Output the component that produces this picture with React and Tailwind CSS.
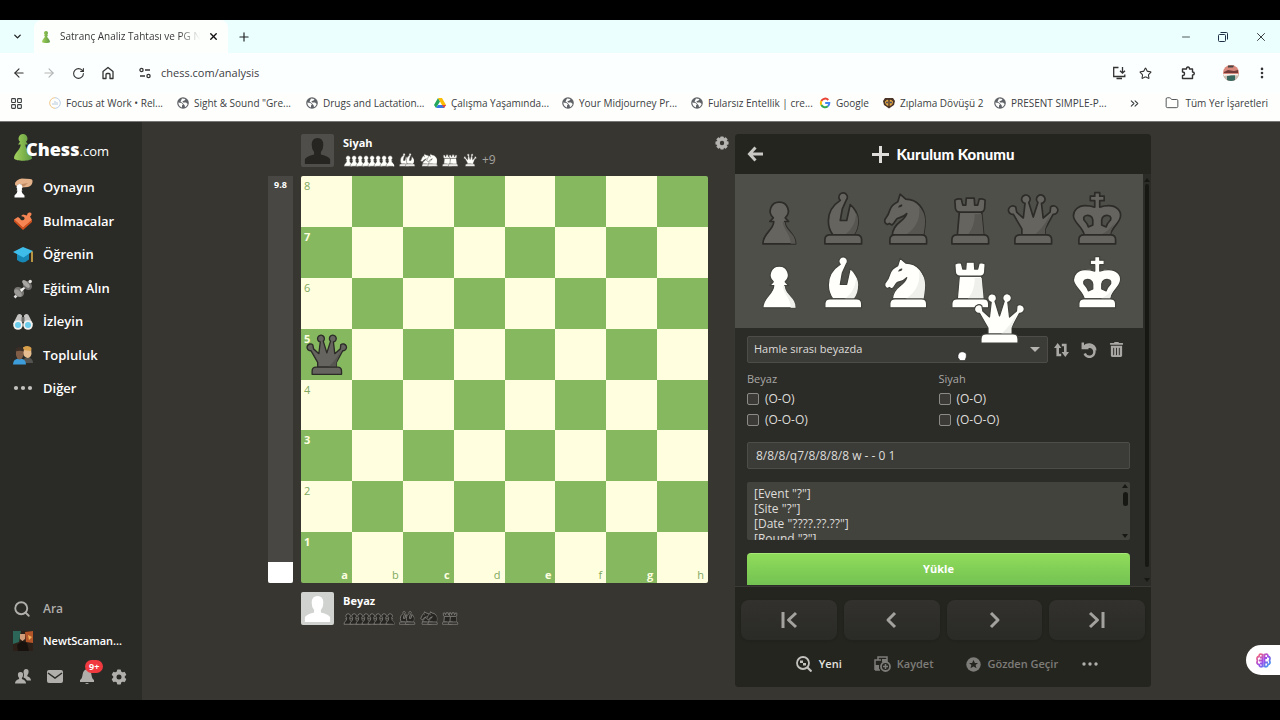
import {
  ArrowLeft, ArrowRight, RotateCw, Star, EllipsisVertical, Plus, X, ChevronDown,
  ChevronsRight, Folder, Search, Minus, LayoutGrid
} from 'lucide-react'
import { FaTrashAlt } from 'react-icons/fa'

const bookmarks = [
  { label: 'Focus at Work • Rel...', icon: 'ring', width: 'w-[112px]' },
  { label: 'Sight & Sound "Gre...', icon: 'globe', width: 'w-[113px]' },
  { label: 'Drugs and Lactation...', icon: 'globe', width: 'w-[112px]' },
  { label: 'Çalışma Yaşamında...', icon: 'drive', width: 'w-[112px]' },
  { label: 'Your Midjourney Pr...', icon: 'globe', width: 'w-[113px]' },
  { label: 'Fularsız Entellik | cre...', icon: 'globe', width: 'w-[112px]' },
  { label: 'Google', icon: 'google', width: 'w-[48px]' },
  { label: 'Zıplama Dövüşü 2', icon: 'game', width: 'w-[95px]' },
  { label: 'PRESENT SIMPLE-P...', icon: 'globe', width: 'w-[116px]' }
]

const navItems = [
  { label: 'Oynayın', icon: 'play' },
  { label: 'Bulmacalar', icon: 'puzzle' },
  { label: 'Öğrenin', icon: 'learn' },
  { label: 'Eğitim Alın', icon: 'train' },
  { label: 'İzleyin', icon: 'watch' },
  { label: 'Topluluk', icon: 'social' },
  { label: 'Diğer', icon: 'more' }
]

const pgn = `[Event "?"]
[Site "?"]
[Date "????.??.??"]
[Round "?"]
[White "?"]
[Black "?"]
[Result "*"]`

const files = ['a', 'b', 'c', 'd', 'e', 'f', 'g', 'h']
const ranks = [8, 7, 6, 5, 4, 3, 2, 1]

const BASE = 'M14 57V53Q14 48 19 48H46Q51 48 51 53V57Z'

const shapes = {
  pawn: {
    body: 'M32.500 15a9 9 0 0 1 6 15.800L42 34.500H38C38.500 44 49 46 49 57H16C16 46 26.500 44 27 34.500H23L26.500 30.800A9 9 0 0 1 32.500 15Z',
    shade: 'M36 35H38C38.500 44 49 46 49 57H44C44 47 37 44 36 35Z'
  },
  bishop: {
    body: 'M29.500 13.200A4.300 4.300 0 1 1 35.500 13L31.500 22L29.500 33.500H36L39.500 17.500C44 21 47.500 27 47.500 34C47.500 40 46 44 43 48H22C19 44 17.500 40 17.500 34C17.500 25 22 18 29.500 13.200Z',
    shade: 'M45.500 26C47 29 47.500 31 47.500 34C47.500 40 46 44 43 48H34C41 43 45 36 45.500 26Z',
    base: BASE
  },
  knight: {
    body: 'M26.300 7L32 12C44 12 51.500 22 51.500 34C51.500 40 50.500 44 50 48H18.500C19 41 22 38 26 35C30 32 32 30 33 26.500C30 30 26 30.500 23.500 31.500C21.500 32.500 22 35 18 38L15.500 36.500L13.500 37.500C11 36.500 10.500 34.500 11 32.500C13 30 15 27 16 23C17 19 19 17 24 14.500Z',
    shade: 'M45.500 20C50 24 51.500 29 51.500 34C51.500 40 50.500 44 50 48H32C42 42 47 32 45.500 20Z',
    detail: 'M24 20.500Q26 16.500 28.500 17.500Q29 20.500 24 20.500Z',
    base: 'M16 57V53Q16 48 21 48H48Q53 48 53 53V57Z'
  },
  rook: {
    body: 'M21.500 25L19.500 48H46L44 25Z',
    shade: 'M37 27H44L46 48H30C35 42 37 35 37 27Z',
    top: 'M17 13Q20 11 23.500 12L25 18H28L28.500 11H36.500L37 18H40L41.500 12Q45 11 47.500 13L47 21Q46.500 25 43 25H22Q18 25 17.500 21Z',
    base: BASE
  },
  queen: {
    body: 'M14.900 20A4.300 4.300 0 1 0 12.500 27.300L21 42V48H44.500V42L52.500 27.300A4.300 4.300 0 1 0 50 19.900L49.500 25L42.500 31L40.800 16.300A4.300 4.300 0 1 0 37.200 15.300L32.500 30L28 15.300A4.300 4.300 0 1 0 24.200 16.300L22.500 31L15.800 25Z',
    shade: 'M50 27L44.500 42V48H34C41 42 45 36 50 27Z',
    base: BASE
  },
  king: {
    body: 'M30 20V13.500H25.500V9H30V5.500H35V9H39.500V13.500H35V20C38 19 41 18.500 44 18.500C52 18.500 56.500 23.500 56 29C55.500 36 48 39 45.500 48H19.500C17 39 9 36 8.500 29C8.500 23.500 13 18.500 20 18.500C24 18.500 27 19 30 20ZM28 38V33C27.500 29 24 28 21.500 28.500C18.500 29 18 32 20 34C22 36 23 37.500 23.500 40ZM37 38V33C37.500 29 41 28 43.500 28.500C46.500 29 47 32 45 34C43 36 42 37.500 41.500 40Z',
    shade: 'M50 36C48 39 46.500 43 45.500 48H36C42 45 46 41 50 36Z',
    base: BASE
  }
}

const pieceNames = ['pawn', 'bishop', 'knight', 'rook', 'queen', 'king']

const tones = {
  light: { fill: '#fffffc', shade: '#efefec', line: '#42423d', width: 1.2 },
  dark: { fill: '#65645f', shade: '#575651', line: '#2c2b28', width: 1.7 },
  takenLight: { fill: '#fffffc', shade: '#fffffc', line: '#55534e', width: 2 },
  takenDark: { fill: '#262522', shade: '#262522', line: '#85837e', width: 3.4 }
}

function PieceShape({ name, tone }) {
  const s = shapes[name]
  const t = tones[tone]
  return (
    <g fill={t.fill} stroke={t.line} strokeWidth={t.width} strokeLinejoin="round">
      <path d={s.body} fillRule="evenodd" />
      <path d={s.shade} fill={t.shade} stroke="none" />
      {s.detail && <path d={s.detail} fill={t.line} stroke="none" />}
      {s.top && <path d={s.top} />}
      {s.base && <path d={s.base} />}
    </g>
  )
}

function Piece({ name, tone, className }) {
  return (
    <svg viewBox="0 0 64 64" className={className}>
      <PieceShape name={name} tone={tone} />
    </svg>
  )
}

function Captured({ tone, queen }) {
  const row = [
    ...[0, 1, 2, 3, 4, 5, 6, 7].map((i) => ['pawn', -3 + i * 6]),
    ['bishop', 53], ['bishop', 59],
    ['knight', 75], ['knight', 81],
    ['rook', 96], ['rook', 102]
  ]
  if (queen) row.push(['queen', 119])
  return (
    <svg width="137" height="16" viewBox="0 0 137 16" className="shrink-0">
      {row.map(([name, x], i) => (
        <g key={i} transform={`translate(${x} 0) scale(0.25)`}>
          <PieceShape name={name} tone={tone} />
        </g>
      ))}
    </svg>
  )
}

function PawnLogo({ className }) {
  return (
    <svg viewBox="0 0 18 27" className={className}>
      <defs>
        <linearGradient id="pawnGreen" x1="0" x2="1">
          <stop offset="0" stopColor="#a3d160" />
          <stop offset="0.5" stopColor="#81b64c" />
          <stop offset="1" stopColor="#5d9948" />
        </linearGradient>
      </defs>
      <path d="M9 0a4.500 4.500 0 0 1 3 7.800L14 10.500H11.300C11.500 16 18 19 18 24.500C16 27.500 2 27.500 0 24.500C0 19 6.500 16 6.700 10.500H4L6 7.800A4.500 4.500 0 0 1 9 0Z" fill="url(#pawnGreen)" />
    </svg>
  )
}

function BookmarkIcon({ type }) {
  if (type === 'ring') {
    return (
      <svg viewBox="0 0 12 12" className="size-3 shrink-0" fill="none">
        <path d="M6 .7A5.300 5.300 0 0 1 6 11.300" stroke="#b9cfe8" />
        <path d="M6 .7A5.300 5.300 0 0 0 6 11.300" stroke="#efc78a" />
        <path d="M4 8V6M6 8V4M8 8V5" stroke="#b7c9de" />
      </svg>
    )
  }
  if (type === 'drive') {
    return (
      <svg viewBox="0 0 12 12" className="size-3 shrink-0">
        <path d="M4 1L0 8L2 11L6 4.500Z" fill="#22a65b" />
        <path d="M4 1H8L12 8H8Z" fill="#fbbc05" />
        <path d="M2 11L4 8H12L10 11Z" fill="#3677e8" />
        <path d="M10 11L8 8H12Z" fill="#e8453c" />
      </svg>
    )
  }
  if (type === 'google') {
    return (
      <svg viewBox="0 0 12 12" className="size-3 shrink-0" fill="none" strokeWidth="2">
        <path d="M9.300 3A4.300 4.300 0 0 0 2.300 4" stroke="#ea4335" />
        <path d="M2.300 4A4.300 4.300 0 0 0 2.300 8" stroke="#fbbc05" />
        <path d="M2.300 8A4.300 4.300 0 0 0 8.800 9.300" stroke="#34a853" />
        <path d="M8.800 9.300A4.300 4.300 0 0 0 10.300 6H6.200" stroke="#4285f4" />
      </svg>
    )
  }
  if (type === 'game') {
    return (
      <svg viewBox="0 0 12 12" className="size-3 shrink-0">
        <path d="M2 1H10L12 4L11 8L6 11.500L1 8L0 4Z" fill="#4b3428" />
        <path d="M2 4.500Q4 2 5.300 3V9Q2 7.500 2 4.500M10 4.500Q8 2 6.700 3V9Q10 7.500 10 4.500" fill="#e7a93c" />
        <circle cx="4" cy="5.500" r="0.900" fill="#33416e" />
        <circle cx="8" cy="5.500" r="0.900" fill="#33416e" />
      </svg>
    )
  }
  return (
    <svg viewBox="0 0 12 12" className="size-3 shrink-0">
      <circle cx="6" cy="6" r="5.800" fill="#5f6368" />
      <path d="M1.300 5.500L4.500 6L6 7.500L5 8.500V10.600Q1.500 9.500 1.300 5.500ZM5 1.400L8.500 1.900L7.500 3.500L5.500 4.200L6 5.500L9 5.500L10.700 7Q9.800 9.500 8 10.200L7.600 8.300L5.500 6L3.500 4.500Z" fill="#fdfdfb" />
    </svg>
  )
}

function NavIcon({ type }) {
  return (
    <svg viewBox="0 0 20 20" className="size-5 shrink-0">
      {type === 'play' && (
        <>
          <path d="M2 5Q4 1 9 .5L17 1Q20 1 19.500 4Q19 8 15 9L9 9.500Q7 8.500 9 7Q5 5 3.500 8Q1.500 7.500 2 5Z" fill="#e5b188" />
          <path d="M9 6L15 5Q12 8 9 9Z" fill="#c08a62" />
          <path d="M6.500 6a3 3 0 0 1 2.200 5L9.500 12.500H8.500Q8.500 15.500 11.500 17.500V19.500H1.500V17.500Q4.500 15.500 4.500 12.500H3.500L4.300 11A3 3 0 0 1 6.500 6Z" fill="#fff" />
        </>
      )}
      {type === 'puzzle' && (
        <>
          <path d="M1 7.500L5 5Q7 6 8 8Q10.500 9 11.500 7Q12 5 9.500 4.500L8 4L10 2.500L14 3.500Q14 1 16 .5Q19 0 18.500 2.500Q18 4 17 4.500L19 8L10 16Z" fill="#f58552" />
          <path d="M1 7.500V9.500L10 18L19 10V8L10 15.500Z" fill="#d4511d" />
        </>
      )}
      {type === 'learn' && (
        <>
          <path d="M4 9H16V14.500Q10 20 4 15Z" fill="#1787b5" />
          <path d="M0 7L10 2L20 6L10.500 12.500Z" fill="#3fbdea" />
          <path d="M19 6.500V17" stroke="#e6b74a" strokeWidth="1.500" />
        </>
      )}
      {type === 'train' && (
        <>
          <path d="M1.500 18.500L4 16" stroke="#ddd" strokeWidth="2.500" />
          <ellipse cx="14.500" cy="6.500" rx="5" ry="4" fill="#6c6b69" transform="rotate(45 14.500 6.500)" />
          <ellipse cx="13" cy="5" rx="4.800" ry="2.200" fill="#a8a7a3" transform="rotate(45 13 5)" />
          <ellipse cx="6" cy="13" rx="5.500" ry="4.500" fill="#777673" transform="rotate(45 6 13)" />
          <ellipse cx="5" cy="14" rx="4.500" ry="2.500" fill="#9c9b98" transform="rotate(45 5 14)" />
          <path d="M7 10.500L11 8L12 9.500L8.500 13Z" fill="#f0f0ee" />
          <circle cx="17.200" cy="2.500" r="1.700" fill="#e2e1df" />
        </>
      )}
      {type === 'watch' && (
        <>
          <path d="M0 12L4.500 3Q6.500 1 9 3.500V13ZM20 12L15.500 3Q13.500 1 11 3.500V13Z" fill="#c4c3c1" />
          <path d="M8.500 5H11.500V10H8.500Z" fill="#6d6c6a" />
          <circle cx="5" cy="13" r="4.800" fill="#f2f1ef" />
          <circle cx="15" cy="13" r="4.800" fill="#f2f1ef" />
          <circle cx="5" cy="13" r="3" fill="#6accea" />
          <circle cx="15" cy="13" r="3" fill="#6accea" />
        </>
      )}
      {type === 'social' && (
        <>
          <path d="M9 16Q11 11 15 11.500Q20 12 20 17H9Z" fill="#55534f" />
          <path d="M10 2Q14 0 18 2L18.500 8Q17.500 12 14.500 12Q10.500 11 10 7Z" fill="#e6bd91" />
          <path d="M10 1.500Q15-1.500 18.500 2L18 5L10 4Z" fill="#d9a04b" />
          <path d="M0 18.500Q0 12.500 6.500 12.500Q13 12.500 13 18.500Z" fill="#3d9ddb" />
          <path d="M3 3H10.500V9Q9 13.500 6.500 13.500Q4 13.500 3 9Z" fill="#805d47" />
          <path d="M2.500 5.500Q2 1 6.500 1Q11.500 1 10.700 5.500Q7 4 2.500 5.500Z" fill="#3b2e27" />
        </>
      )}
      {type === 'more' && (
        <g fill="#c3c2c0">
          <circle cx="3" cy="9" r="2.100" />
          <circle cx="10" cy="9" r="2.100" />
          <circle cx="17" cy="9" r="2.100" />
        </g>
      )}
    </svg>
  )
}

function Gear({ className, teeth = 8 }) {
  const angles = Array.from({ length: teeth }, (_, i) => (i * 360) / teeth)
  return (
    <svg viewBox="0 0 16 16" className={className} fill="currentColor">
      {angles.map((a) => (
        <rect key={a} x="6" y="0.500" width="4" height="4" rx="0.800" transform={`rotate(${a} 8 8)`} />
      ))}
      <circle cx="8" cy="8" r="4.200" fill="none" stroke="currentColor" strokeWidth="3.400" />
    </svg>
  )
}

function Browser() {
  return (
    <header className="text-[#3c4043]">
      <div className="flex h-[33px] items-center bg-[#ebffff]">
        <button aria-label="Sekme ara" className="flex w-[34px] justify-center"><ChevronDown size={11} strokeWidth={3} className="text-[#222]" /></button>
        <div className="flex h-full w-[194px] items-center rounded-t-lg bg-[#fdfffd] pl-2">
          <PawnLogo className="h-3 w-2" />
          <span className="ml-2.5 w-[140px] bg-linear-to-r from-[#333] from-85% to-transparent bg-clip-text text-[10px] whitespace-nowrap text-transparent">
            Satranç Analiz Tahtası ve PG No
          </span>
          <button aria-label="Sekmeyi kapat" className="ml-2"><X size={11} strokeWidth={3} className="text-[#111]" /></button>
        </div>
        <button aria-label="Yeni sekme" className="ml-[9px]"><Plus size={14} className="text-[#222]" /></button>
        <div className="ml-auto flex gap-[25px] pr-3 text-[#222]">
          <button aria-label="Küçült"><Minus size={12} strokeWidth={1.500} /></button>
          <button aria-label="Önceki boyut">
            <svg width="12" height="12" viewBox="0 0 12 12" fill="none" stroke="#1d3045"><rect x="1.500" y="3.500" width="7" height="7" rx="1" /><path d="M3.500 1.500H9.500Q10.500 1.500 10.500 2.500V8.500" /></svg>
          </button>
          <button aria-label="Kapat"><X size={14} strokeWidth={1.500} /></button>
        </div>
      </div>
      <div className="flex h-10 items-center bg-[#fcffff] pr-[15px] pl-3 text-[#333]">
        <div className="flex items-center gap-4">
          <button aria-label="Geri"><ArrowLeft size={14} /></button>
          <button aria-label="İleri"><ArrowRight size={14} className="text-[#b4b6b6]" /></button>
          <button aria-label="Yenile"><RotateCw size={13} /></button>
          <button aria-label="Ana sayfa">
            <svg width="14" height="14" viewBox="0 0 14 14" fill="none" stroke="currentColor" strokeWidth="1.300" strokeLinejoin="round"><path d="M2 5.500L7 1.500L12 5.500V12.500H9V8.500Q9 7.500 8 7.500H6Q5 7.500 5 8.500V12.500H2Z" /></svg>
          </button>
        </div>
        <svg viewBox="0 0 12 12" className="mr-2.5 ml-6 size-3" fill="none" stroke="#333" strokeWidth="1.300">
          <circle cx="2.500" cy="3" r="1.600" /><path d="M6 3H11M1 9H6" /><circle cx="9.500" cy="9" r="1.600" />
        </svg>
        <input aria-label="Adres" defaultValue="chess.com/analysis" className="min-w-0 flex-1 bg-transparent text-[11px] text-[#3c4043] outline-none" />
        <div className="flex items-center gap-[13px]">
          <button aria-label="Yükle">
            <svg width="14" height="14" viewBox="0 0 14 14" fill="none" stroke="currentColor" strokeWidth="1.300"><path d="M6.500 1.500H1.700V10.500H12.800V8.500M4.500 12.500H10M10.500 1V7M8 4.800L10.500 7.200L13 4.800" /></svg>
          </button>
          <button aria-label="Yer işareti"><Star size={13} /></button>
        </div>
        <button aria-label="Uzantılar" className="ml-[29px]">
          <svg width="14" height="14" viewBox="0 0 14 14" fill="none" stroke="currentColor" strokeWidth="1.400" strokeLinejoin="round"><path d="M1.500 3H5.500Q5.500 1 7 1Q8.500 1 8.500 3H11.500V6Q13.300 6 13.300 7.500Q13.300 9 11.500 9V12.500H1.500V9.500Q3.500 9.500 3.500 7.700Q3.500 6 1.500 6Z" /></svg>
        </button>
        <svg viewBox="0 0 16 16" className="ml-7 size-4">
          <circle cx="8" cy="8" r="8" fill="#d8897c" />
          <path d="M0 9H16Q15 16 8 16Q1 16 0 9Z" fill="#c9bdb2" />
          <path d="M4 11L12 10V15Q8 17 4 15Z" fill="#39685f" />
          <path d="M1 7L5 5L11 6L15 5V8H1Z" fill="#723b39" />
          <path d="M0 9H15V10.500L8 10L1 11Z" fill="#f5f1ea" />
          <path d="M5 .5H11L10 2.500H5Z" fill="#4a4642" />
        </svg>
        <button aria-label="Menü" className="ml-4"><EllipsisVertical size={14} strokeWidth={2.500} className="-mr-1" /></button>
      </div>
      <nav className="flex h-[29px] items-center border-b border-[#777] bg-[#fefffc] pb-2 text-[10px] leading-4">
        <LayoutGrid size={13} className="mr-[26px] ml-2.5 shrink-0" />
        <div className="flex min-w-0 gap-4">
          {bookmarks.map((b) => (
            <a key={b.label} href="#" className={`flex shrink-0 items-center gap-[5px] whitespace-nowrap ${b.width}`}>
              <BookmarkIcon type={b.icon} />
              {b.label}
            </a>
          ))}
        </div>
        <div className="ml-auto flex shrink-0 items-center pr-3">
          <ChevronsRight size={13} className="mr-6" />
          <a href="#" className="flex items-center gap-1.5 whitespace-nowrap"><Folder size={14} strokeWidth={1.500} />Tüm Yer İşaretleri</a>
        </div>
      </nav>
    </header>
  )
}

function Sidebar() {
  return (
    <aside className="flex w-[142px] shrink-0 flex-col bg-[#2a2a26] text-white">
      <a href="#" className="mt-3 ml-3.5 flex h-[27px] items-baseline">
        <PawnLogo className="h-[27px] w-[18px] self-end" />
        <span className="-ml-1.5 text-lg leading-[30px] font-extrabold">Chess</span>
        <span className="text-[13px] leading-[30px]">.com</span>
      </a>
      <nav className="mt-[11px] flex h-[233px] flex-col justify-between">
        {navItems.map((item) => (
          <a key={item.label} href="#" className="flex h-8 items-center gap-2.5 pl-[13px] text-[13px] font-semibold">
            <NavIcon type={item.icon} />
            {item.label}
          </a>
        ))}
      </nav>
      <div className="mt-auto pb-[15px]">
        <button className="flex h-8 items-center gap-3 pl-[13px] text-xs font-semibold text-[#b0afac]">
          <Search size={18} strokeWidth={2.500} />
          Ara
        </button>
        <a href="#" className="flex h-8 items-center gap-2.5 pl-[13px] text-[11px] font-semibold">
          <svg viewBox="0 0 20 20" className="size-5">
            <path d="M0 0H20V20H0Z" fill="#2c2018" />
            <path d="M0 0H8L6 11L0 13Z" fill="#2c6658" />
            <path d="M12 1L20 0V12L13 11Z" fill="#b4562a" />
            <path d="M15 4L19 6L16 9Z" fill="#f3b058" />
            <path d="M7 3H12V8L9.500 10L7 8Z" fill="#d19d78" />
            <path d="M4 14L9 10L14 12L16 20H5Z" fill="#17120e" />
          </svg>
          NewtScaman...
        </a>
        <div className="mt-[11px] flex items-center gap-4 pl-[15px] text-[#b0afac]">
          <button aria-label="Arkadaşlar">
            <svg width="16" height="15" viewBox="0 0 16 15" fill="currentColor">
              <path d="M11 0Q13.800 0 13.600 3Q13.500 5 12.300 6.200V7.200Q16 8.500 16 11.500H12Q10.500 9 8.500 8.500Q9.500 6.500 8.500 3Q8.800 0 11 0Z" />
              <path d="M5.500 3Q8.300 3 8.100 6Q8 8 6.900 9V10Q11 11 11 14.500H0Q0 11 4.100 10V9Q3 8 2.900 6Q2.700 3 5.500 3Z" />
            </svg>
          </button>
          <button aria-label="Mesajlar">
            <svg width="16" height="13" viewBox="0 0 16 13"><rect width="16" height="13" rx="2" fill="currentColor" /><path d="M1 3L8 8L15 3" fill="none" stroke="#2a2a26" strokeWidth="1.500" /></svg>
          </button>
          <button aria-label="Bildirimler" className="relative">
            <svg width="16" height="17" viewBox="0 0 16 17" fill="currentColor"><path d="M8 1Q12 2 12.500 7Q13 11 15 12V14H1V12Q3 11 3.500 7Q4 2 8 1ZM6 15H10Q8 17 6 15Z" /></svg>
            <span className="absolute -top-2 left-1.5 rounded-full bg-[#f03a3f] px-1 text-[9px] leading-[13px] font-bold text-white">9+</span>
          </button>
          <button aria-label="Ayarlar"><Gear teeth={6} className="size-4" /></button>
        </div>
      </div>
    </aside>
  )
}

function Avatar({ dark }) {
  return (
    <svg viewBox="0 0 34 34" className="size-[33px] shrink-0">
      <rect width="34" height="34" rx="2" fill={dark ? '#4f4e4b' : '#d0d2cf'} />
      <path d="M17 4Q23 4 23 11Q23 16 20.500 18.500V21Q29 23 30 26V31H4V26Q5 23 13.500 21V18.500Q11 16 11 11Q11 4 17 4Z" fill={dark ? '#262522' : '#fff'} />
    </svg>
  )
}

function Player({ name, dark, tone, score }) {
  return (
    <div className="ml-[33px] flex gap-[9px]">
      <Avatar dark={dark} />
      <div>
        <div className="text-[11px] leading-[18px] font-bold text-white">{name}</div>
        <div className="flex h-[15px] items-center gap-0.5">
          <Captured tone={tone} queen={!!score} />
          <span className="text-xs text-[#a3a29f]">{score}</span>
        </div>
      </div>
    </div>
  )
}

function Board() {
  return (
    <div className="grid aspect-square flex-1 grid-cols-8 grid-rows-8 overflow-hidden rounded-xs">
      {ranks.map((rank, r) => files.map((file, f) => {
        const green = (r + f) % 2 === 1
        return (
          <div key={file + rank} className={`relative text-[11px] leading-none ${green ? 'bg-[#86b860] font-bold text-[#ffffe0]' : 'bg-[#ffffe0] text-[#80a860]'}`}>
            {f === 0 && <span className="absolute top-1 left-[3px]">{rank}</span>}
            {r === 7 && <span className="absolute right-1 bottom-[3px]">{file}</span>}
            {file === 'a' && rank === 5 && <Piece name="queen" tone="dark" className="relative size-full" />}
          </div>
        )
      }))}
    </div>
  )
}

function Castling({ side }) {
  return (
    <fieldset>
      <legend className="text-[11px] leading-[14px] text-[#a9a8a5]">{side}</legend>
      {['(O-O)', '(O-O-O)'].map((label) => (
        <label key={label} className="mt-[5px] flex h-4 items-center gap-1.5 text-xs text-[#deddda]">
          <input type="checkbox" className="size-3 appearance-none rounded-xs border border-[#8c8b88] bg-[#3b3a36]" />
          {label}
        </label>
      ))}
    </fieldset>
  )
}

function ScrollRail({ className, thumb }) {
  return (
    <div className={`flex flex-col items-center justify-between ${className}`}>
      <span className="border-x-3 border-b-4 border-x-transparent border-b-[#171714]" />
      <span className={`rounded-full bg-[#171714] ${thumb}`} />
      <span className="mt-auto border-x-3 border-t-4 border-x-transparent border-t-[#171714]" />
    </div>
  )
}

function StepButton({ label, d }) {
  return (
    <button aria-label={label} className="flex h-10 flex-1 items-center justify-center rounded-lg bg-linear-to-b from-[#32312d] to-[#2a2a26] shadow-sm">
      <svg width="20" height="20" viewBox="0 0 20 20" fill="none" stroke="#a3a29f" strokeWidth="3" strokeLinejoin="round"><path d={d} /></svg>
    </button>
  )
}

function SetupPanel() {
  return (
    <section className="relative flex max-w-[416px] flex-1 flex-col self-start overflow-hidden rounded-sm bg-[#2b2b27]">
      <div className="flex h-10 items-center bg-[#252520] px-3 text-[#c9c8c4]">
        <button aria-label="Geri">
          <svg width="16" height="16" viewBox="0 0 16 16" fill="none" stroke="currentColor" strokeWidth="3"><path d="M8.500 1.500L2.500 8L8.500 14.500M2.500 8H16" /></svg>
        </button>
        <h1 className="flex flex-1 items-center justify-center gap-2 pr-4 font-[Lato,sans-serif] text-[15px] font-black text-white">
          <svg width="17" height="17" viewBox="0 0 17 17" stroke="#deddda" strokeWidth="3"><path d="M8.500 0V17M0 8.500H17" /></svg>
          Kurulum Konumu
        </h1>
      </div>
      <div className="flex h-[412px]">
        <div className="min-w-0 flex-1">
          <div className="grid grid-cols-6 bg-[#4e4f49] py-[13px] pr-[15px] pl-3">
            {pieceNames.map((name) => <Piece key={name} name={name} tone="dark" className="h-16 w-full" />)}
            {pieceNames.map((name) => name === 'queen' ? <span key={name} /> : <Piece key={name} name={name} tone="light" className="h-16 w-full" />)}
          </div>
          <div className="flex flex-col pr-[13px] pl-3">
            <div className="mt-2 flex items-center gap-3 text-[#a9a8a5]">
              <div className="relative flex-1">
                <select aria-label="Hamle sırası" className="block h-[27px] w-full appearance-none rounded-xs border border-[#4d4c48] bg-[#3b3b37] px-1.5 text-[11px] text-[#deddda]">
                  <option>Hamle sırası beyazda</option>
                  <option>Hamle sırası siyahta</option>
                </select>
                <span className="pointer-events-none absolute top-[11px] right-2 border-x-5 border-t-5 border-x-transparent border-t-[#b5b4b1]" />
              </div>
              <div className="flex items-center gap-3 pr-1.5">
                <button aria-label="Tahtayı çevir" className="-ml-1.5">
                  <svg width="15" height="14" viewBox="0 0 15 14" fill="none" stroke="currentColor" strokeWidth="2.600"><path d="M7.200 12H3.700V3M11.300 11V2H7.800" /><path d="M0 5L3.700 0L7.400 5ZM7.600 9L11.300 14L15 9Z" fill="currentColor" stroke="none" /></svg>
                </button>
                <button aria-label="Sıfırla">
                  <svg width="16" height="16" viewBox="0 0 16 16" fill="none" stroke="currentColor" strokeWidth="2.500"><path d="M2.500 4.800H8.500A5 5 0 1 1 3.700 11.500" /><path d="M1.800 0.500V6H7.500" /><path d="M2.500 5.500Q5 2.300 8.800 2.500A5.800 5.800 0 0 1 14.200 8.500" /></svg>
                </button>
                <button aria-label="Temizle"><FaTrashAlt size={15} /></button>
              </div>
            </div>
            <div className="mt-[9px] grid grid-cols-2">
              <Castling side="Beyaz" />
              <Castling side="Siyah" />
            </div>
            <input aria-label="FEN" defaultValue="8/8/8/q7/8/8/8/8 w - - 0 1" className="mt-3.5 h-[27px] rounded-xs border border-[#4d4c48] bg-[#3b3b37] px-2 text-xs text-[#deddda]" />
            <div className="relative mt-[13px] h-[58px]">
              <textarea aria-label="PGN" defaultValue={pgn} className="block size-full resize-none overflow-hidden rounded-xs bg-[#43433e] px-[7px] pt-1 text-xs leading-[15px] text-[#deddda]" />
              <ScrollRail className="absolute top-0.5 right-0.5 bottom-0.5" thumb="mt-1 h-3.5 w-[5px]" />
            </div>
            <button className="mt-[13px] h-8 rounded-t-sm border-t border-[#a8e878] bg-linear-to-b from-[#8fdc5b] to-[#74c252] text-[11px] font-bold text-white">Yükle</button>
          </div>
        </div>
        <ScrollRail className="w-2 py-1" thumb="mt-0.5 h-[383px] w-1" />
      </div>
      <div className="border-t border-[#3a3935] bg-[#252520] px-1.5 pt-[13px] pb-[11px]">
        <div className="flex gap-[7px]">
          <StepButton label="Başa dön" d="M4 2V18M17 3L9.500 10L17 17" />
          <StepButton label="Önceki" d="M13 3L6 10L13 17" />
          <StepButton label="Sonraki" d="M7 3L14 10L7 17" />
          <StepButton label="Sona git" d="M16 2V18M3 3L10.500 10L3 17" />
        </div>
        <div className="mt-3 flex h-6 items-center justify-center pl-2 text-[11px] font-semibold text-[#7d7c78]">
          <button className="flex items-center gap-[7px] text-[#e3e2df]">
            <svg width="16" height="16" viewBox="0 0 16 16" fill="none" stroke="#c3c2bf" strokeWidth="1.800"><circle cx="7" cy="7" r="6" /><path d="M11.500 11.500L15.500 15.500" strokeWidth="2.200" /><path d="M4 4.500H7V7H10V9.500H7V7H4Z" fill="#c3c2bf" stroke="none" /></svg>
            Yeni
          </button>
          <button className="ml-8 flex items-center gap-1.5">
            <svg width="17" height="16" viewBox="0 0 17 16" fill="none" stroke="currentColor"><path d="M4 4V1H13V6M1 14V4H7M1 14H6" strokeWidth="1.500" /><path d="M1 9H5V14H1ZM8 3H13V6H8Z" fill="currentColor" stroke="none" /><circle cx="11.500" cy="10.500" r="4.500" strokeWidth="1.800" fill="#252520" /><path d="M11.500 8V13M9 10.500H14" strokeWidth="1.500" /></svg>
            Kaydet
          </button>
          <button className="ml-8 flex items-center gap-[7px]">
            <svg width="15" height="15" viewBox="0 0 15 15"><circle cx="7.500" cy="7.500" r="7.200" fill="currentColor" /><path d="M7.500 3L8.900 6H12L9.600 8L10.500 11.300L7.500 9.400L4.500 11.300L5.400 8L3 6H6.100Z" fill="#252520" /></svg>
            Gözden Geçir
          </button>
          <button aria-label="Diğer" className="ml-6">
            <svg width="16" height="4" viewBox="0 0 16 4" fill="#b0afac"><circle cx="2" cy="2" r="1.700" /><circle cx="8" cy="2" r="1.700" /><circle cx="14" cy="2" r="1.700" /></svg>
          </button>
        </div>
      </div>
      {/* queen being dragged off the palette */}
      <Piece name="queen" tone="light" className="pointer-events-none absolute top-[152px] left-[232px] size-16" />
      <svg viewBox="0 0 10 10" className="pointer-events-none absolute top-[217px] left-[222px] size-2.5">
        <path d="M1 4L2.500 1.500L4 1L5 .7L6.500 1L8 1.500L9.300 3V6L8 9.500H3L1 6.500Z" fill="#fff" stroke="#222" strokeWidth="0.600" />
      </svg>
    </section>
  )
}

export default function App() {
  return (
    <div className="flex min-h-screen flex-col bg-black py-5 font-['Open_Sans',sans-serif]">
      <Browser />
      <div className="relative flex flex-1 bg-[#383631]">
        <Sidebar />
        <main className="flex flex-1 justify-center pt-3 pr-[3px]">
          <div className="flex max-w-[440px] flex-1 flex-col gap-[9px]">
            <Player name="Siyah" dark tone="takenLight" score="+9" />
            <div className="flex gap-2">
              <div className="flex w-[25px] flex-col justify-between bg-[#484743] text-center text-[9px] font-bold text-white">
                <span className="pt-0.5">9.8</span>
                <span className="h-[21px] rounded-b-xs bg-white" />
              </div>
              <Board />
            </div>
            <Player name="Beyaz" tone="takenDark" />
          </div>
          <button aria-label="Tahta ayarları" className="flex w-[27px] justify-center self-start pt-0.5 text-[#b5b4b1]"><Gear className="size-3.5" /></button>
          <SetupPanel />
        </main>
        <button aria-label="Asistan" className="absolute right-0 bottom-[25px] flex h-[30px] w-[34px] items-center rounded-l-full bg-white pl-2.5">
          <svg width="15" height="15" viewBox="0 0 15 15" fill="none" strokeWidth="1.800">
            <defs><linearGradient id="brain" x1="0" y1="0" x2="1" y2="1"><stop offset="0" stopColor="#ff6a70" /><stop offset="0.500" stopColor="#a04be8" /><stop offset="1" stopColor="#35a8f0" /></linearGradient></defs>
            <path d="M6.500 1.500Q3 0 3 3.500Q0 4 1.500 7.500Q0 11 3 11.500Q3.500 14.500 6.500 13.500ZM8.500 1.500Q12 0 12 3.500Q15 4 13.500 7.500Q15 11 12 11.500Q11.500 14.500 8.500 13.500ZM3 7.500H6M9 5H11M9 9.500H12M4 4.500H6M4 10.500H6" stroke="url(#brain)" />
          </svg>
        </button>
      </div>
    </div>
  )
}
